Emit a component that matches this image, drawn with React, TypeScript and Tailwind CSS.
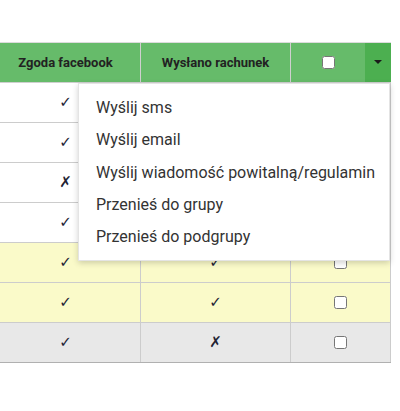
import { useState } from "react";

type Row = { facebook: boolean; invoice: boolean; tone: "white" | "yellow" | "gray" };

const rows: Row[] = [
  { facebook: true, invoice: true, tone: "white" },
  { facebook: true, invoice: true, tone: "white" },
  { facebook: false, invoice: true, tone: "white" },
  { facebook: true, invoice: true, tone: "white" },
  { facebook: true, invoice: true, tone: "yellow" },
  { facebook: true, invoice: true, tone: "yellow" },
  { facebook: true, invoice: false, tone: "gray" },
];

const toneClass = {
  white: "bg-white",
  yellow: "bg-[#fafac9]",
  gray: "bg-[#e8e8e8]",
};

const menuItems = [
  "Wyślij sms",
  "Wyślij email",
  "Wyślij wiadomość powitalną/regulamin",
  "Przenieś do grupy",
  "Przenieś do podgrupy",
];

const Mark = ({ ok }: { ok: boolean }) => (
  <span className="font-['DejaVu_Sans',sans-serif] text-[15px] text-[#223]">
    {ok ? "✓" : "✗"}
  </span>
);

export default function App() {
  const [open] = useState(true);

  return (
    <div className="w-[400px] h-[411px] overflow-hidden bg-white pt-[42px] font-['Roboto',sans-serif]">
      <div className="relative -ml-[9px] w-[400px]">
        <div className="grid grid-cols-[150px_150px_100px] border-t border-[#dcdcdc] bg-[#66bb6a] h-[41px] border-b border-b-[#cfcfcf]">
          <div className="flex items-center justify-center border-r border-[#cfcfcf] text-[13px] font-bold text-[#222]">
            Zgoda facebook
          </div>
          <div className="flex items-center justify-center border-r border-[#cfcfcf] text-[13px] font-bold text-[#222]">
            Wysłano rachunek
          </div>
          <div className="flex">
            <div className="flex flex-1 items-center justify-center">
              <input type="checkbox" className="w-[13px] h-[13px]" />
            </div>
            <div className="flex w-[26px] items-center justify-center bg-[#4caf50]">
              <svg width="8" height="5" viewBox="0 0 8 5">
                <path d="M0 0h8L4 4z" fill="#1a1a1a" />
              </svg>
            </div>
          </div>
        </div>

        {rows.map((row, i) => (
          <div
            key={i}
            className={`grid grid-cols-[150px_150px_100px] h-[40px] border-b ${
              i === rows.length - 1 ? "border-[#b0b0b0]" : "border-[#cccccc]"
            } ${toneClass[row.tone]}`}
          >
            <div className="flex items-center justify-center border-r border-[#cccccc]">
              <Mark ok={row.facebook} />
            </div>
            <div className="flex items-center justify-center border-r border-[#cccccc]">
              <Mark ok={row.invoice} />
            </div>
            <div className="flex items-center justify-center border-r border-[#cccccc] w-[100px]">
              <input type="checkbox" className="w-[13px] h-[13px]" />
            </div>
          </div>
        ))}

        {open && (
          <div className="absolute left-[87px] top-[41px] w-[312px] bg-white pt-[8px] pb-[7px] shadow-[0_2px_6px_rgba(0,0,0,0.18)] border border-[#e4e4e4]">
            {menuItems.map((item) => (
              <div key={item} className="pl-[17px] leading-[32.25px] text-[16px] text-[#333]">
                {item}
              </div>
            ))}
          </div>
        )}
      </div>
    </div>
  );
}
